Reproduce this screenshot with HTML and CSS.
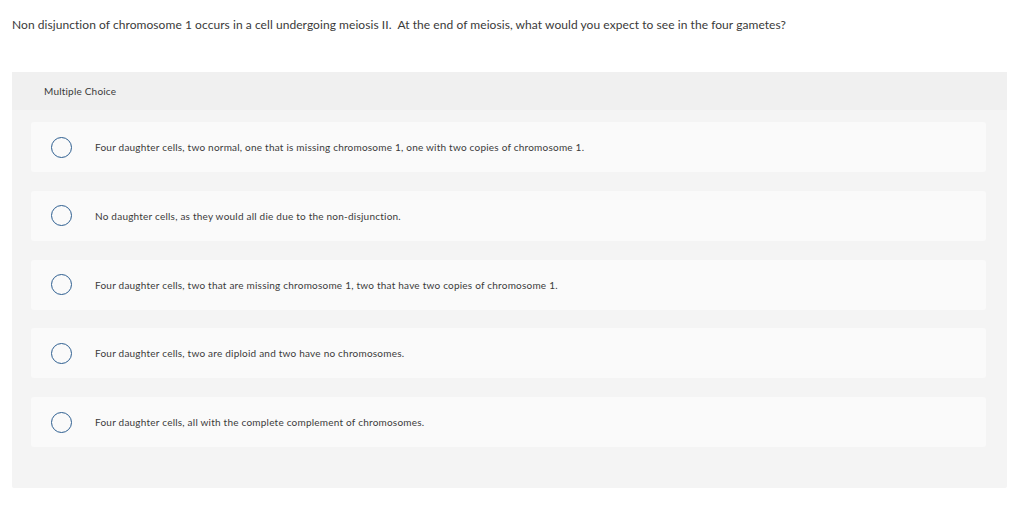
FILE: index.html
```html
<!DOCTYPE html>
<html>
<head>
<meta charset="utf-8">
<link rel="stylesheet" href="styles.css">
</head>
<body>
<p class="question">Non disjunction of chromosome 1 occurs in a cell undergoing meiosis II.&nbsp; At the end of meiosis, what would you expect to see in the four gametes?</p>
<div class="panel">
  <div class="panel-head">Multiple Choice</div>
  <div class="panel-body">
    <div class="option"><span class="radio"></span><span class="label">Four daughter cells, two normal, one that is missing chromosome 1, one with two copies of chromosome 1.</span></div>
    <div class="option"><span class="radio"></span><span class="label">No daughter cells, as they would all die due to the non-disjunction.</span></div>
    <div class="option"><span class="radio"></span><span class="label">Four daughter cells, two that are missing chromosome 1, two that have two copies of chromosome 1.</span></div>
    <div class="option"><span class="radio"></span><span class="label">Four daughter cells, two are diploid and two have no chromosomes.</span></div>
    <div class="option"><span class="radio"></span><span class="label">Four daughter cells, all with the complete complement of chromosomes.</span></div>
  </div>
</div>
</body>
</html>
```
FILE: styles.css
```css
html, body { margin: 0; padding: 0; background: #fff; }
body {
  font-family: "Lato", "Noto Sans", sans-serif;
  color: #333;
  padding: 0 17px 0 12px;
}
.question {
  margin: 0;
  padding-top: 18px;
  height: 72px;
  box-sizing: border-box;
  font-size: 12px;
  line-height: 14px;
  letter-spacing: 0.06px;
  color: #3a3a3a;
}
.panel {
  background: #f4f4f4;
  border-radius: 2px;
  padding-bottom: 41px;
}
.panel-head {
  background: #f0f0f0;
  height: 38px;
  padding-left: 32px;
  display: flex;
  align-items: center;
  font-size: 10px;
  letter-spacing: 0.2px;
  color: #3a3a3a;
}
.panel-body {
  padding: 12px 21px 0 19px;
  display: flex;
  flex-direction: column;
  gap: 18.75px;
}
.option {
  background: #fafafa;
  border-radius: 3px;
  height: 50px;
  display: flex;
  align-items: center;
  padding-left: 20px;
}
.radio {
  flex: none;
  box-sizing: border-box;
  width: 21px;
  height: 21px;
  border: 1.2px solid #2d5e90;
  border-radius: 50%;
}
.label {
  margin-left: 23px;
  font-size: 10px;
  letter-spacing: 0.22px;
  color: #3a3a3a;
}
```
